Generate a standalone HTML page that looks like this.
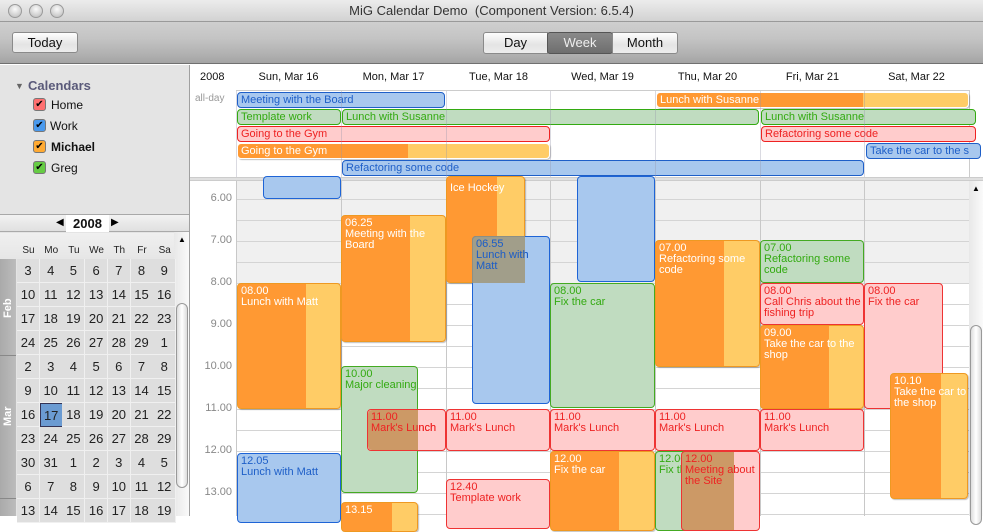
<!DOCTYPE html>
<html><head><meta charset="utf-8"><style>
*{margin:0;padding:0;box-sizing:border-box}
body{width:983px;height:516px;overflow:hidden;position:relative;font-family:"Liberation Sans",sans-serif;font-size:11px;background:#fff}
.a{position:absolute}
.title{left:0;top:0;width:983px;height:22px;background:linear-gradient(#ececec,#d2d2d2);border-bottom:1px solid #9a9a9a;text-align:center;font-size:13px;line-height:22px;color:#333}
.dot{top:4px;width:14px;height:14px;border-radius:50%;background:radial-gradient(circle at 50% 35%,#fafafa,#b8b8b8);border:1px solid #9a9a9a}
.tb{left:0;top:22px;width:983px;height:42px;background:linear-gradient(#cfcfcf,#c4c4c4 40%,#b0b0b0 80%,#a4a4a4);border-bottom:1px solid #707070}
.btn{background:linear-gradient(#fdfdfd,#e4e4e4 60%,#ececec);border:1px solid #8a8a8a;border-radius:3px;font-size:13px;text-align:center;line-height:20px;color:#111}
.left{left:0;top:65px;width:190px;height:451px;background:#e4e4e4;border-right:1px solid #a0a0a0}
.cal{left:38px;font-size:12px;color:#111}
.cb{left:33px;width:13px;height:13px;border-radius:3px;border:1px solid #777;font-size:10px;line-height:11px;text-align:center;color:#000}
.mc{font-size:13px;color:#222;text-align:center;width:23px;height:24px;line-height:24px;background:#dedede;border-right:1px solid #f0f0f0;border-bottom:1px solid #f0f0f0}
.dh{font-size:10px;color:#222;width:23px;text-align:center}
.hl{left:236px;width:733px;height:1px;background:#d4d4d4}
.vl{top:181px;width:1px;height:335px;background:#c8c8c8}
.tl{left:190px;width:42px;text-align:right;font-size:11px;color:#888}
.ev{border-radius:4px;overflow:hidden;font-size:11px;line-height:11px;padding:2px 3px;border:1px solid;white-space:nowrap}
.o{background:linear-gradient(90deg,#ff9933 0,#ff9933 var(--s),#ffcc66 var(--s));border-color:#ee9922;color:#fff;box-shadow:1px 1px 1px rgba(0,0,0,.25)}
.b{background:#a8c8ee;border-color:#1e64d6;color:#1e5fc8}
.g{background:#c0dcc0;border-color:#44aa22;color:#33aa11}
.r{background:#ffcccc;border-color:#ee3333;color:#ee2222}
.ad{height:16px;line-height:14px;padding:0 3px;font-size:11px;border-radius:4px;border:1px solid;overflow:hidden;white-space:nowrap}
.hd{top:71px;font-size:11px;color:#111;text-align:center;width:105px}
</style></head><body>
<div class="a title">MiG Calendar Demo &nbsp;(Component Version: 6.5.4)</div>
<div class="a dot" style="left:8px"></div><div class="a dot" style="left:29px"></div><div class="a dot" style="left:50px"></div>
<div class="a tb"></div>
<div class="a btn" style="left:12px;top:32px;width:66px;height:21px">Today</div>
<div class="a btn" style="left:483px;top:32px;width:65px;height:22px;border-radius:3px 0 0 3px">Day</div>
<div class="a btn" style="left:547px;top:32px;width:66px;height:22px;background:linear-gradient(#8a8a8a,#6e6e6e);color:#eee;border-color:#555">Week</div>
<div class="a btn" style="left:612px;top:32px;width:66px;height:22px;border-radius:0 3px 3px 0">Month</div>

<div class="a left"></div>
<div class="a" style="left:15px;top:81px;font-size:9px;color:#666">▼</div>
<div class="a" style="left:28px;top:78px;font-size:13px;font-weight:bold;color:#5a5a7a">Calendars</div>
<div class="a cb" style="top:98px;background:#ff7070">✔</div><div class="a cal" style="left:51px;top:98px">Home</div>
<div class="a cb" style="top:119px;background:#4a9aee">✔</div><div class="a cal" style="left:50px;top:119px">Work</div>
<div class="a cb" style="top:140px;background:#ffaa33">✔</div><div class="a cal" style="left:51px;top:140px;font-weight:bold">Michael</div>
<div class="a cb" style="top:161px;background:#66cc44">✔</div><div class="a cal" style="left:51px;top:161px">Greg</div>
<div class="a" style="left:0;top:214px;width:189px;height:1px;background:#a8a8a8"></div>
<div class="a" style="left:0;top:215px;width:189px;height:17px;background:linear-gradient(#f2f2f2,#e0e0e0);border-bottom:1px solid #aaa"></div>
<div class="a" style="left:66px;top:215px;width:43px;height:17px;background:#fff;text-align:center;font-size:13px;font-weight:bold;line-height:17px;color:#111">2008</div>
<div class="a" style="left:56px;top:217px;font-size:10px">◀</div><div class="a" style="left:111px;top:217px;font-size:10px">▶</div>
<div class="a" style="left:0;top:233px;width:174px;height:26px;background:linear-gradient(#f0f0f0,#e6e6e6)"></div>
<div class="a" style="left:0;top:259px;width:16px;height:257px;background:linear-gradient(90deg,#aaa,#bcbcbc)"></div>
<div class="a" style="font-size:11px;color:#fff;font-weight:bold;transform:rotate(-90deg);transform-origin:0 0;top:318px;left:2px">Feb</div>
<div class="a" style="left:2px;top:426px;font-size:11px;color:#fff;font-weight:bold;transform:rotate(-90deg);transform-origin:0 0">Mar</div>
<div class="a" style="left:0;top:355px;width:16px;height:1px;background:#888"></div>
<div class="a" style="left:0;top:498px;width:16px;height:1px;background:#888"></div>
<div class="a" style="left:174px;top:232px;width:15px;height:284px;background:linear-gradient(90deg,#e8e8e8,#fafafa)"></div>
<div class="a" style="left:176px;top:303px;width:12px;height:185px;border-radius:6px;border:1px solid #999;background:linear-gradient(90deg,#ddd,#fff,#ddd)"></div>
<div class="a" style="left:178px;top:235px;font-size:8px">▲</div>
<div id="mini"></div>

<div class="a" style="left:190px;top:65px;width:793px;height:451px;background:#fff"></div>
<div class="a" style="left:200px;top:71px;font-size:11px;color:#111">2008</div>
<div class="a hd" style="left:236px">Sun, Mar 16</div>
<div class="a hd" style="left:341px">Mon, Mar 17</div>
<div class="a hd" style="left:446px">Tue, Mar 18</div>
<div class="a hd" style="left:550px">Wed, Mar 19</div>
<div class="a hd" style="left:655px">Thu, Mar 20</div>
<div class="a hd" style="left:760px">Fri, Mar 21</div>
<div class="a hd" style="left:864px">Sat, Mar 22</div>
<div class="a" style="left:195px;top:93px;font-size:10px;color:#999">all-day</div>
<div class="a" style="left:236px;top:90px;width:734px;height:1px;background:#ccc"></div>
<div class="a" style="left:969px;top:90px;width:1px;height:88px;background:#ccc"></div>
<div class="a" style="left:190px;top:177px;width:793px;height:4px;background:#e0e0e0;border-top:1px solid #ccc;border-bottom:1px solid #ccc"></div>
<div class="a" style="left:236px;top:181px;width:733px;height:102px;background:#f0f0f0"></div>
<div id="grid"></div>
<div class="a" style="left:969px;top:181px;width:14px;height:335px;background:linear-gradient(90deg,#e8e8e8,#fafafa)"></div>
<div class="a" style="left:970px;top:325px;width:12px;height:200px;border-radius:6px;border:1px solid #999;background:linear-gradient(90deg,#ddd,#fff,#ddd)"></div>
<div class="a" style="left:972px;top:184px;font-size:8px">▲</div>

<div class="a ad b" style="left:237px;top:92px;width:208px">Meeting with the Board</div>
<div class="a ad o" style="--s:206px;left:656px;top:92px;width:313px">Lunch with Susanne</div>
<div class="a ad g" style="left:237px;top:109px;width:104px">Template work</div>
<div class="a ad g" style="left:342px;top:109px;width:417px">Lunch with Susanne</div>
<div class="a ad g" style="left:761px;top:109px;width:215px">Lunch with Susanne</div>
<div class="a ad r" style="left:237px;top:126px;width:313px">Going to the Gym</div>
<div class="a ad r" style="left:761px;top:126px;width:215px">Refactoring some code</div>
<div class="a ad o" style="--s:170px;left:237px;top:143px;width:313px">Going to the Gym</div>
<div class="a ad b" style="left:866px;top:143px;width:115px">Take the car to the s</div>
<div class="a ad b" style="left:342px;top:160px;width:522px">Refactoring some code</div>

<div class="a ev b" style="left:263px;top:176px;width:78px;height:23px"></div>
<div class="a ev o" style="--s:68px;left:237px;top:283px;width:104px;height:126px">08.00<br>Lunch with Matt</div>
<div class="a ev b" style="left:237px;top:453px;width:104px;height:70px">12.05<br>Lunch with Matt</div>
<div class="a ev o" style="--s:68px;left:341px;top:215px;width:105px;height:127px">06.25<br>Meeting with the<br>Board</div>
<div class="a ev g" style="left:341px;top:366px;width:77px;height:127px">10.00<br>Major cleaning</div>
<div class="a ev o" style="--s:50px;left:341px;top:502px;width:77px;height:30px">13.15</div>
<div class="a ev o" style="--s:50px;left:446px;top:176px;width:79px;height:107px;padding-top:6px">Ice Hockey</div>
<div class="a ev b" style="left:472px;top:236px;width:78px;height:168px">06.55<br>Lunch with<br>Matt</div>
<div class="a" style="left:472px;top:236px;width:53px;height:47px;background:rgba(160,150,120,.85);border-radius:4px 0 0 0"></div>
<div class="a" style="left:476px;top:239px;color:#1e5fc8;line-height:11px">06.55<br>Lunch with<br>Matt</div>
<div class="a ev b" style="left:577px;top:176px;width:78px;height:106px"></div>
<div class="a ev g" style="left:550px;top:283px;width:105px;height:125px">08.00<br>Fix the car</div>
<div class="a ev o" style="--s:68px;left:550px;top:451px;width:105px;height:80px">12.00<br>Fix the car</div>
<div class="a ev r" style="left:446px;top:479px;width:104px;height:50px">12.40<br>Template work</div>
<div class="a ev o" style="--s:68px;left:655px;top:240px;width:105px;height:127px">07.00<br>Refactoring some<br>code</div>
<div class="a ev g" style="left:760px;top:240px;width:104px;height:43px">07.00<br>Refactoring some<br>code</div>
<div class="a ev r" style="left:760px;top:283px;width:104px;height:42px">08.00<br>Call Chris about the<br>fishing trip</div>
<div class="a ev o" style="--s:68px;left:760px;top:325px;width:104px;height:84px">09.00<br>Take the car to the<br>shop</div>
<div class="a ev r" style="left:864px;top:283px;width:79px;height:126px">08.00<br>Fix the car</div>
<div class="a ev o" style="--s:50px;left:890px;top:373px;width:78px;height:126px">10.10<br>Take the car to<br>the shop</div>
<div class="a ev r" style="left:367px;top:409px;width:79px;height:42px">11.00<br>Mark's Lunch</div>
<div class="a" style="left:368px;top:410px;width:50px;height:40px;background:#cc9966;border-radius:4px 0 0 4px"></div>
<div class="a" style="left:371px;top:412px;color:#ee2222;line-height:11px;white-space:nowrap">11.00<br>Mark's Lunch</div>
<div class="a ev r" style="left:446px;top:409px;width:104px;height:42px">11.00<br>Mark's Lunch</div>
<div class="a ev r" style="left:550px;top:409px;width:105px;height:42px">11.00<br>Mark's Lunch</div>
<div class="a ev r" style="left:655px;top:409px;width:105px;height:42px">11.00<br>Mark's Lunch</div>
<div class="a ev r" style="left:760px;top:409px;width:104px;height:42px">11.00<br>Mark's Lunch</div>
<div class="a ev g" style="left:655px;top:451px;width:45px;height:80px">12.00<br>Fix th</div>
<div class="a ev r" style="left:681px;top:451px;width:79px;height:80px;background:linear-gradient(90deg,#cc9966 52px,#ffcccc 52px)">12.00<br>Meeting about<br>the Site</div>

<script>
var g='';
for(var h=5.5;h<=14;h+=0.5){var y=Math.round(199+(h-6)*42);if(y>181&&y<516)g+='<div class="a hl" style="top:'+y+'px"></div>';}
[236,341,446,550,655,760,864].forEach(function(x){g+='<div class="a vl" style="left:'+x+'px"></div>';});
for(var h=6;h<=13;h++){var y=199+(h-6)*42;g+='<div class="a tl" style="top:'+(y-7)+'px">'+h+'.00</div>';}
document.getElementById('grid').innerHTML=g;
[236,341,446,550,655,760,864].forEach(function(x){document.body.insertAdjacentHTML('beforeend','<div class="a" style="left:'+x+'px;top:91px;width:1px;height:86px;background:rgba(150,150,170,.35)"></div>');});
var m='',days=['Su','Mo','Tu','We','Th','Fr','Sa'];
for(var i=0;i<7;i++)m+='<div class="a dh" style="left:'+(17+i*22.7)+'px;top:245px">'+days[i]+'</div>';
var starts=[3,10,17,24,2,9,16,23,30,6,13];
for(var r=0;r<11;r++){var d=starts[r];for(var c=0;c<7;c++){var st='';if(r==6&&c==1)st='background:#6b9bd2;border:1px solid #335;';
m+='<div class="a mc" style="left:'+(17+c*22.7)+'px;top:'+(259+r*24)+'px;'+st+'">'+d+'</div>';d++;if((r==3&&d>29)||(r==8&&d>31))d=1;}}
document.getElementById('mini').innerHTML=m;
</script>
</body></html>
